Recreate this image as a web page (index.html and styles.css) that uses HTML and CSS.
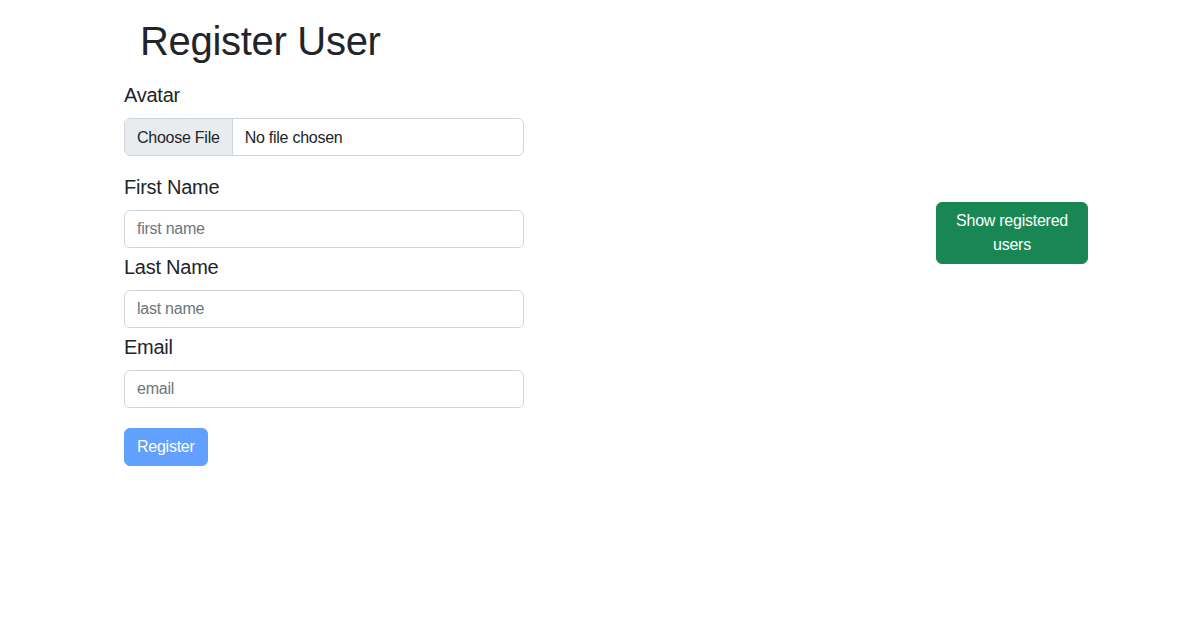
FILE: index.html
```html
<!DOCTYPE html>
<html lang="en">
<head>
<meta charset="utf-8">
<title>Register User</title>
<link rel="stylesheet" href="styles.css">
</head>
<body>
<main class="page">
  <section class="form-col">
    <h1 class="title">Register User</h1>
    <form class="reg-form">
      <div class="field field-file">
        <label class="form-label" for="avatar">Avatar</label>
        <input class="form-control file-control" type="file" id="avatar">
      </div>
      <div class="field">
        <label class="form-label" for="first">First Name</label>
        <input class="form-control" type="text" id="first" placeholder="first name">
      </div>
      <div class="field">
        <label class="form-label" for="last">Last Name</label>
        <input class="form-control" type="text" id="last" placeholder="last name">
      </div>
      <div class="field">
        <label class="form-label" for="email">Email</label>
        <input class="form-control" type="email" id="email" placeholder="email">
      </div>
      <button class="btn btn-primary" type="submit" disabled>Register</button>
    </form>
  </section>
  <aside class="side-col">
    <button class="btn btn-success" type="button">Show registered users</button>
  </aside>
</main>
</body>
</html>
```
FILE: styles.css
```css
* { box-sizing: border-box; }
html, body { margin: 0; padding: 0; background: #fff; }
body {
  font-family: "Liberation Sans", Arial, sans-serif;
  font-size: 16px;
  line-height: 1.5;
  color: #212529;
  letter-spacing: -0.25px;
}
.page {
  display: flex;
  padding: 17px 112px 0 124px;
}
.form-col {
  width: 400px;
}
.title {
  margin: 0 0 15px 16px;
  font-size: 40px;
  font-weight: 400;
  line-height: 48px;
  letter-spacing: -0.3px;
}
.reg-form {
  display: flex;
  flex-direction: column;
  align-items: flex-start;
}
.field {
  width: 100%;
  margin-bottom: 4px;
}
.field-file {
  margin-bottom: 16px;
}
.form-label {
  display: block;
  font-size: 20px;
  line-height: 30px;
  margin-bottom: 8px;
}
.form-control {
  display: block;
  width: 100%;
  height: 38px;
  padding: 6px 12px;
  font-family: inherit;
  font-size: 16px;
  line-height: 24px;
  letter-spacing: -0.25px;
  color: #212529;
  background: #fff;
  border: 1px solid #ced4da;
  border-radius: 6px;
  outline: none;
}
.form-control::placeholder {
  color: #6c757d;
  opacity: 1;
}
.file-control {
  overflow: hidden;
}
.file-control::file-selector-button {
  padding: 6px 12px;
  margin: -6px 12px -6px -12px;
  height: 38px;
  font-family: inherit;
  font-size: 16px;
  letter-spacing: -0.25px;
  color: #212529;
  background: #e9ecef;
  border: 0;
  border-right: 1px solid #ced4da;
  border-radius: 0;
}
.btn {
  display: inline-block;
  padding: 6px 12px;
  font-family: inherit;
  font-size: 16px;
  line-height: 24px;
  letter-spacing: -0.25px;
  text-align: center;
  color: #fff;
  border: 1px solid transparent;
  border-radius: 6px;
}
.btn-primary {
  margin-top: 16px;
  background: #0d6efd;
  border-color: #0d6efd;
}
.btn-primary:disabled {
  opacity: 0.65;
}
.side-col {
  margin-left: auto;
  padding-top: 185px;
}
.btn-success {
  width: 152px;
  background: #198754;
  border-color: #198754;
}
```
